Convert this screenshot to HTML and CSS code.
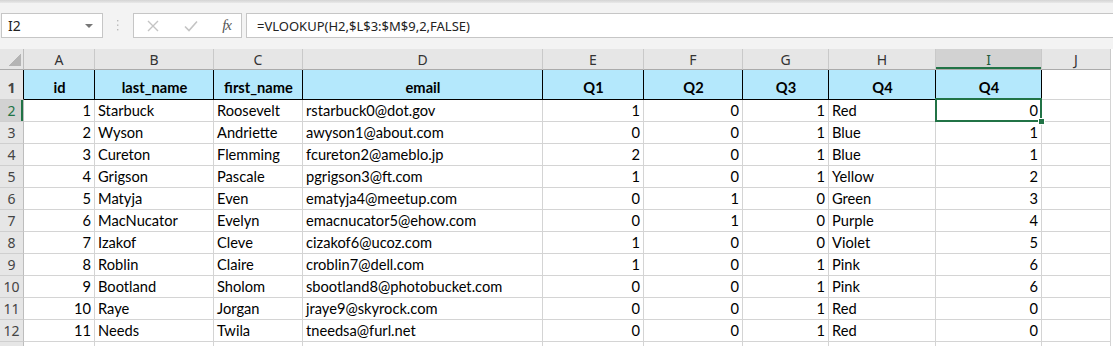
FILE: index.html
```html
<!DOCTYPE html>
<html lang="en">
<head>
    <meta charset="UTF-8">
    <meta name="viewport" content="width=device-width, initial-scale=1.0">
    <title>Book1 - Excel</title>
    <link rel="stylesheet" href="styles.css">
</head>
<body>
    <div class="strip"></div>
    <div class="bar">
        <div class="namebox">
            <span>I2</span>
            <span class="arrow"></span>
        </div>
        <div class="grip">
            <svg width="3" height="11" viewBox="0 0 3 11"><rect x="1" y="0" width="1.4" height="1.4" fill="#b8b8b8"/><rect x="1" y="4.5" width="1.4" height="1.4" fill="#b8b8b8"/><rect x="1" y="9" width="1.4" height="1.4" fill="#b8b8b8"/></svg>
        </div>
        <div class="buttons">
            <svg class="btn" width="14" height="14" viewBox="0 0 14 14"><path d="M2 2 L12 12 M12 2 L2 12" stroke="#c4c4c4" stroke-width="1.4" fill="none"/></svg>
            <svg class="btn" width="16" height="14" viewBox="0 0 16 14"><path d="M2 7.5 L6 11.5 L14 2.5" stroke="#c4c4c4" stroke-width="1.6" fill="none"/></svg>
            <span class="fx">fx</span>
        </div>
        <div class="formula">=VLOOKUP(H2,$L$3:$M$9,2,FALSE)</div>
    </div>

    <div class="sheet">
        <div class="row cols">
            <div class="corner"><span></span></div>
            <div>A</div><div>B</div><div>C</div><div>D</div><div>E</div>
            <div>F</div><div>G</div><div>H</div><div class="cur">I</div><div>J</div>
        </div>
        <div class="row head">
            <div class="rh">1</div>
            <div>id</div><div>last_name</div><div>first_name</div><div>email</div>
            <div>Q1</div><div>Q2</div><div>Q3</div><div>Q4</div><div>Q4</div><div class="blank"></div>
        </div>
        <div class="row">
            <div class="rh cur">2</div>
            <div class="n">1</div><div>Starbuck</div><div>Roosevelt</div><div>rstarbuck0@dot.gov</div>
            <div class="n">1</div><div class="n">0</div><div class="n">1</div><div>Red</div><div class="n sel">0</div><div></div>
        </div>
        <div class="row">
            <div class="rh">3</div>
            <div class="n">2</div><div>Wyson</div><div>Andriette</div><div>awyson1@about.com</div>
            <div class="n">0</div><div class="n">0</div><div class="n">1</div><div>Blue</div><div class="n">1</div><div></div>
        </div>
        <div class="row">
            <div class="rh">4</div>
            <div class="n">3</div><div>Cureton</div><div>Flemming</div><div>fcureton2@ameblo.jp</div>
            <div class="n">2</div><div class="n">0</div><div class="n">1</div><div>Blue</div><div class="n">1</div><div></div>
        </div>
        <div class="row">
            <div class="rh">5</div>
            <div class="n">4</div><div>Grigson</div><div>Pascale</div><div>pgrigson3@ft.com</div>
            <div class="n">1</div><div class="n">0</div><div class="n">1</div><div>Yellow</div><div class="n">2</div><div></div>
        </div>
        <div class="row">
            <div class="rh">6</div>
            <div class="n">5</div><div>Matyja</div><div>Even</div><div>ematyja4@meetup.com</div>
            <div class="n">0</div><div class="n">1</div><div class="n">0</div><div>Green</div><div class="n">3</div><div></div>
        </div>
        <div class="row">
            <div class="rh">7</div>
            <div class="n">6</div><div>MacNucator</div><div>Evelyn</div><div>emacnucator5@ehow.com</div>
            <div class="n">0</div><div class="n">1</div><div class="n">0</div><div>Purple</div><div class="n">4</div><div></div>
        </div>
        <div class="row">
            <div class="rh">8</div>
            <div class="n">7</div><div>Izakof</div><div>Cleve</div><div>cizakof6@ucoz.com</div>
            <div class="n">1</div><div class="n">0</div><div class="n">0</div><div>Violet</div><div class="n">5</div><div></div>
        </div>
        <div class="row">
            <div class="rh">9</div>
            <div class="n">8</div><div>Roblin</div><div>Claire</div><div>croblin7@dell.com</div>
            <div class="n">1</div><div class="n">0</div><div class="n">1</div><div>Pink</div><div class="n">6</div><div></div>
        </div>
        <div class="row">
            <div class="rh">10</div>
            <div class="n">9</div><div>Bootland</div><div>Sholom</div><div>sbootland8@photobucket.com</div>
            <div class="n">0</div><div class="n">0</div><div class="n">1</div><div>Pink</div><div class="n">6</div><div></div>
        </div>
        <div class="row">
            <div class="rh">11</div>
            <div class="n">10</div><div>Raye</div><div>Jorgan</div><div>jraye9@skyrock.com</div>
            <div class="n">0</div><div class="n">0</div><div class="n">1</div><div>Red</div><div class="n">0</div><div></div>
        </div>
        <div class="row">
            <div class="rh">12</div>
            <div class="n">11</div><div>Needs</div><div>Twila</div><div>tneedsa@furl.net</div>
            <div class="n">0</div><div class="n">0</div><div class="n">1</div><div>Red</div><div class="n">0</div><div></div>
        </div>
        <div class="row">
            <div class="rh"></div>
            <div></div><div></div><div></div><div></div><div></div>
            <div></div><div></div><div></div><div></div><div></div>
        </div>
    </div>
</body>
</html>
```

FILE: styles.css
```css
* {
    margin: 0;
    padding: 0;
    box-sizing: border-box;
}

body {
    background-color: #f3f3f3;
    height: 346px;
    overflow: hidden;
    font-family: "Noto Sans", "Open Sans", sans-serif;
    color: #000;
}

.strip {
    height: 3px;
    background: linear-gradient(#d4d4d4, #e9e9e9);
}

.bar {
    display: flex;
    align-items: center;
    padding: 10px 0 11px 1px;
    height: 46px;
}

.namebox,
.buttons,
.formula {
    height: 25px;
    border: 1px solid #c6c6c6;
    background-color: #fff;
    display: flex;
    align-items: center;
}

.namebox {
    width: 102px;
    padding: 0 9px 0 6px;
    justify-content: space-between;
    font-size: 14px;
    color: #222;
}

.arrow {
    width: 0;
    height: 0;
    border-left: 4px solid transparent;
    border-right: 4px solid transparent;
    border-top: 4px solid #777;
}

.grip {
    width: 3px;
    margin: 0 14px 0 13px;
    display: flex;
}

.buttons {
    width: 109px;
    justify-content: space-between;
    padding: 0 10px 0 12px;
}

.fx {
    font-family: "Liberation Serif", serif;
    font-style: italic;
    font-size: 15px;
    color: #555;
    letter-spacing: -1px;
}

.formula {
    flex: 1;
    margin-left: 4px;
    margin-right: -5px;
    padding-left: 10px;
    font-size: 13px;
    color: #222;
}

.sheet {
    background-color: #fff;
    font-family: Lato, "Liberation Sans", sans-serif;
    font-size: 14.67px;
}

.row {
    display: grid;
    grid-template-columns: 24px 71px 119px 89px 240px 101px 99px 86px 107px 106px 69px;
    height: 22px;
}

.row > div {
    border-right: 1px solid #d4d4d4;
    border-bottom: 1px solid #d4d4d4;
    padding: 0 2px 1px 3px;
    display: flex;
    align-items: flex-end;
    line-height: 19px;
    white-space: nowrap;
    overflow: hidden;
    position: relative;
}

.row > .n {
    justify-content: flex-end;
    padding-right: 3px;
}

.row > .rh {
    background-color: #e6e6e6;
    border-right-color: #bdbdbd;
    border-bottom-color: #cfcfcf;
    justify-content: center;
    padding: 0 0 1px 0;
    font-family: "Noto Sans", sans-serif;
    font-size: 14px;
    color: #444;
}

.row > .rh.cur {
    background-color: #d2d2d2;
    color: #217346;
    box-shadow: inset -2px 0 0 #217346;
}

.cols {
    height: 21px;
}

.cols > div {
    background-color: #e6e6e6;
    border-right-color: #c9c9c9;
    border-bottom-color: #ababab;
    justify-content: center;
    align-items: center;
    font-family: "Noto Sans", sans-serif;
    font-size: 14px;
    color: #333;
    padding: 0;
}

.cols > .cur {
    background-color: #d2d2d2;
    color: #1e5a3a;
    box-shadow: inset 0 -2px 0 #217346;
}

.cols > .corner {
    justify-content: flex-end;
    align-items: flex-end;
    padding: 0 2px 3px 0;
    border-right-color: #bdbdbd;
}

.corner span {
    width: 13px;
    height: 13px;
    background: linear-gradient(to bottom right, transparent 50%, #b4b4b4 50%);
}

.head {
    height: 30px;
}

.head > div {
    background-color: #b4e8fc;
    border-right-color: #000;
    border-bottom-color: #000;
    justify-content: center;
    font-weight: bold;
    padding-bottom: 2px;
}

.head > .rh {
    border-right-color: #000;
    padding-bottom: 2px;
}

.head > .blank {
    background-color: #fff;
    border-right-color: #d4d4d4;
    border-bottom-color: #d4d4d4;
}

.sel {
    overflow: visible !important;
}

.sel::after {
    content: "";
    position: absolute;
    left: -1px;
    top: -2px;
    right: -1px;
    bottom: -1px;
    border: 2px solid #217346;
}

.sel::before {
    content: "";
    position: absolute;
    right: -4px;
    bottom: -4px;
    width: 5px;
    height: 5px;
    background-color: #217346;
    border: 1px solid #fff;
    z-index: 1;
}
```
